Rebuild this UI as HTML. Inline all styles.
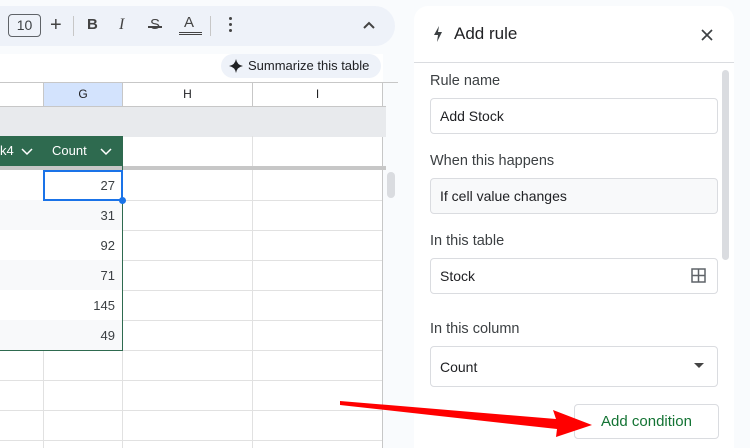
<!DOCTYPE html>
<html><head><style>
body{margin:0;width:750px;height:448px;background:#f9fbfd;font-family:"Liberation Sans",sans-serif;position:relative;overflow:hidden;color:#202124}
.a{position:absolute}
.vl{position:absolute;width:1px;background:#e1e1e1}
.hl{position:absolute;height:1px;background:#e1e1e1}
.lab{position:absolute;left:430px;font-size:14.5px;color:#3c4043}
.inp{position:absolute;left:430px;width:288px;border:1px solid #dadce0;border-radius:4px;font-size:14px;box-sizing:border-box;padding-left:9px;display:flex;align-items:center;background:#fff}
.num{position:absolute;left:43px;width:72px;text-align:right;font-size:13px;color:#3c4043}
</style></head><body>
<div class="a" style="left:-20px;top:6px;width:415px;height:40px;background:#eef2f9;border-radius:20px"></div>
<div class="a" style="left:8px;top:14px;width:33px;height:23px;border:1px solid #5f6368;border-radius:4px;box-sizing:border-box;font-size:14px;text-align:center;line-height:21px;color:#3c4043">10</div>
<div class="a" style="left:50px;top:14px;font-size:20px;color:#444">+</div>
<div class="a" style="left:73px;top:16px;width:1px;height:20px;background:#c7c7c7"></div>
<div class="a" style="left:87px;top:16px;font-size:15px;font-weight:bold;color:#444">B</div>
<div class="a" style="left:119px;top:16px;font-size:16px;font-style:italic;color:#444;font-family:'Liberation Serif'">I</div>
<div class="a" style="left:150px;top:16px;font-size:15px;color:#444">S</div>
<div class="a" style="left:148px;top:26px;width:14px;height:1.5px;background:#444"></div>
<div class="a" style="left:184px;top:14px;font-size:15px;color:#444">A</div>
<div class="a" style="left:179px;top:32px;width:23px;height:3px;border-top:1px solid #444;border-bottom:1px solid #444;box-sizing:border-box"></div>
<div class="a" style="left:210px;top:16px;width:1px;height:20px;background:#c7c7c7"></div>
<div class="a" style="left:229px;top:17px;width:3px;height:3px;background:#444;border-radius:50%;box-shadow:0 6px 0 #444,0 12px 0 #444"></div>
<svg class="a" style="left:362px;top:20px" width="14" height="10"><path d="M2 8L7 3L12 8" stroke="#444" stroke-width="2" fill="none"/></svg>
<div class="a" style="left:0;top:54px;width:383px;height:394px;background:#fff"></div>
<div class="a" style="left:221px;top:54px;width:160px;height:24px;background:#eef2f9;border-radius:12px;font-size:13px;line-height:24px;padding-left:27px;box-sizing:border-box">Summarize this table</div>
<svg class="a" style="left:229px;top:59px" width="14" height="14"><path d="M7 0Q8 6 14 7Q8 8 7 14Q6 8 0 7Q6 6 7 0Z" fill="#202124"/></svg>
<div class="hl" style="left:0;top:82px;width:398px;background:#c7c7c7"></div>
<div class="a" style="left:44px;top:83px;width:78px;height:23px;background:#d3e3fd;text-align:center;font-size:12px;line-height:23px">G</div>
<div class="a" style="left:123px;top:83px;width:129px;text-align:center;font-size:12px;line-height:23px">H</div>
<div class="a" style="left:253px;top:83px;width:129px;text-align:center;font-size:12px;line-height:23px">I</div>
<div class="vl" style="left:43px;top:82px;height:24px;background:#c7c7c7"></div>
<div class="vl" style="left:122px;top:82px;height:24px;background:#c7c7c7"></div>
<div class="vl" style="left:252px;top:82px;height:24px;background:#c7c7c7"></div>
<div class="vl" style="left:382px;top:82px;height:366px;background:#c7c7c7"></div>
<div class="a" style="left:0;top:106px;width:386px;height:30px;background:#e8eaed;border-top:1px solid #c7c7c7"></div>
<div class="a" style="left:0;top:136px;width:123px;height:30px;background:#2e6a4f;color:#fff;font-size:13px;line-height:30px"><span style="position:absolute;left:0">k4</span><span style="position:absolute;left:52px">Count</span></div>
<svg class="a" style="left:21px;top:148px" width="12" height="8"><path d="M1 1L6 6L11 1" stroke="#fff" stroke-width="1.5" fill="none"/></svg>
<svg class="a" style="left:100px;top:148px" width="12" height="8"><path d="M1 1L6 6L11 1" stroke="#fff" stroke-width="1.5" fill="none"/></svg>
<div class="vl" style="left:252px;top:136px;height:312px"></div>
<div class="a" style="left:0;top:166px;width:386px;height:4px;background:#c7c7c7"></div>
<div class="a" style="left:387px;top:172px;width:8px;height:26px;background:#dadce0;border-radius:4px"></div>
<div class="a" style="left:0;top:200px;width:122px;height:30px;background:#f8f9fa"></div>
<div class="a" style="left:0;top:260px;width:122px;height:30px;background:#f8f9fa"></div>
<div class="a" style="left:0;top:320px;width:122px;height:30px;background:#f8f9fa"></div>
<div class="hl" style="left:122px;top:200px;width:260px"></div>
<div class="hl" style="left:122px;top:230px;width:260px"></div>
<div class="hl" style="left:122px;top:260px;width:260px"></div>
<div class="hl" style="left:122px;top:290px;width:260px"></div>
<div class="hl" style="left:122px;top:320px;width:260px"></div>
<div class="hl" style="left:0;top:380px;width:382px"></div>
<div class="hl" style="left:0;top:410px;width:382px"></div>
<div class="hl" style="left:0;top:440px;width:382px"></div>
<div class="a" style="left:0;top:350px;width:123px;height:1px;background:#2e6a4f"></div>
<div class="hl" style="left:123px;top:350px;width:259px"></div>
<div class="a" style="left:122px;top:136px;width:1px;height:215px;background:#2e6a4f"></div>
<div class="vl" style="left:43px;top:351px;height:97px"></div>
<div class="vl" style="left:122px;top:351px;height:97px"></div>
<div class="a" style="left:43px;top:170px;width:80px;height:31px;border:2px solid #1a73e8;box-sizing:border-box"></div>
<div class="a" style="left:119px;top:197px;width:7px;height:7px;border-radius:50%;background:#1a73e8"></div>
<div class="num" style="top:178px">27</div>
<div class="num" style="top:208px">31</div>
<div class="num" style="top:238px">92</div>
<div class="num" style="top:268px">71</div>
<div class="num" style="top:298px">145</div>
<div class="num" style="top:328px">49</div>
<div class="a" style="left:414px;top:6px;width:320px;height:442px;background:#fff;border-radius:14px 14px 0 0"></div>
<svg class="a" style="left:433px;top:26px" width="10" height="16"><path d="M6 0L1 9H5L4 16L9 6H5Z" fill="#3c4043"/></svg>
<div class="a" style="left:454px;top:24px;font-size:17px">Add rule</div>
<svg class="a" style="left:701px;top:29px" width="12" height="12"><path d="M1 1L11 11M11 1L1 11" stroke="#3c4043" stroke-width="1.7"/></svg>
<div class="hl" style="left:414px;top:62px;width:320px;background:#dadce0"></div>
<div class="a" style="left:722px;top:70px;width:7px;height:190px;background:#dadce0;border-radius:4px"></div>
<div class="lab" style="top:73px">Rule name</div>
<div class="inp" style="top:98px;height:36px">Add Stock</div>
<div class="lab" style="top:153px">When this happens</div>
<div class="inp" style="top:178px;height:36px;background:#f8f9fa">If cell value changes</div>
<div class="lab" style="top:233px">In this table</div>
<div class="inp" style="top:258px;height:36px">Stock</div>
<svg class="a" style="left:691px;top:268px" width="15" height="15"><rect x="1" y="1" width="13" height="13" fill="none" stroke="#5f6368" stroke-width="1.5"/><path d="M7.5 1V14M1 7.5H14" stroke="#5f6368" stroke-width="1.5"/></svg>
<div class="lab" style="top:321px">In this column</div>
<div class="inp" style="top:346px;height:41px">Count</div>
<svg class="a" style="left:694px;top:363px" width="10" height="6"><path d="M0 0H10L5 5Z" fill="#444"/></svg>
<div class="a" style="left:574px;top:404px;width:145px;height:35px;border:1px solid #dadce0;border-radius:4px;box-sizing:border-box;color:#137333;font-size:15px;text-align:center;line-height:33px;background:#fff">Add condition</div>
<svg class="a" style="left:0;top:0" width="750" height="448"><path d="M340 401L556 419L553 410L592 425L556 437L557 429L340 405Z" fill="#f00"/></svg>
</body></html>
